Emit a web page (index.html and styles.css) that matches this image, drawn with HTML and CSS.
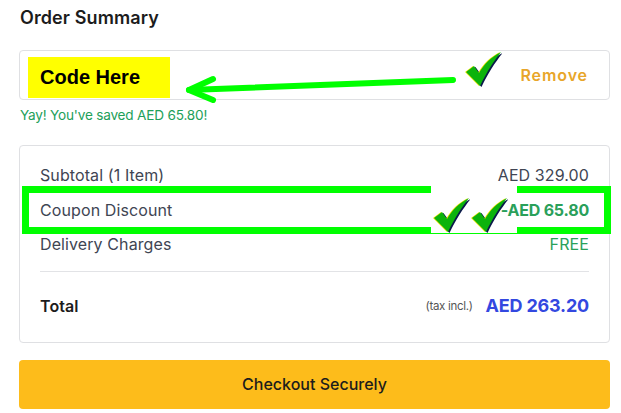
FILE: index.html
```html
<!DOCTYPE html>
<html>
<head>
<meta charset="utf-8">
<link rel="stylesheet" href="styles.css">
</head>
<body>
<div class="page">
  <h2 class="title">Order Summary</h2>

  <div class="coupon">
    <div class="code">Code Here</div>
    <span class="remove">Remove</span>
    <svg class="arrow" width="290" height="40" viewBox="0 0 290 40">
      <path d="M4 27 L268 17" stroke="#00ff00" stroke-width="6" stroke-linecap="round" fill="none"/>
      <path d="M28 16 L4 27 L28 37" stroke="#00ff00" stroke-width="6" stroke-linecap="round" stroke-linejoin="round" fill="none"/>
    </svg>
    <svg class="tick tick-a" width="38" height="36" viewBox="0 0 38 36">
      <path d="M2 21 L10 15 L15 22 C20 13 27 6 37 1 C30 10 23 20 16 35 Z" fill="#0b1a4a" transform="translate(1.5,1)"/>
      <path d="M2 21 L10 15 L15 22 C20 13 27 6 37 1 C30 10 23 20 16 35 Z" fill="#f2e600" transform="translate(-1,0)"/>
      <path d="M2 21 L10 15 L15 22 C20 13 27 6 37 1 C30 10 23 20 16 35 Z" fill="#0cb30c"/>
    </svg>
  </div>
  <p class="saved">Yay! You've saved AED 65.80!</p>

  <div class="summary">
    <div class="row"><span>Subtotal (1 Item)</span><span>AED 329.00</span></div>
    <div class="row discount">
      <span>Coupon Discount</span><span class="green strong">-AED 65.80</span>
      <div class="hl"><div class="hl-gap">
        <svg class="tick" width="38" height="36" viewBox="0 0 38 36">
          <path d="M2 21 L10 15 L15 22 C20 13 27 6 37 1 C30 10 23 20 16 35 Z" fill="#0b1a4a" transform="translate(1.5,1)"/>
          <path d="M2 21 L10 15 L15 22 C20 13 27 6 37 1 C30 10 23 20 16 35 Z" fill="#f2e600" transform="translate(-1,0)"/>
          <path d="M2 21 L10 15 L15 22 C20 13 27 6 37 1 C30 10 23 20 16 35 Z" fill="#0cb30c"/>
        </svg>
        <svg class="tick" width="38" height="36" viewBox="0 0 38 36">
          <path d="M2 21 L10 15 L15 22 C20 13 27 6 37 1 C30 10 23 20 16 35 Z" fill="#0b1a4a" transform="translate(1.5,1)"/>
          <path d="M2 21 L10 15 L15 22 C20 13 27 6 37 1 C30 10 23 20 16 35 Z" fill="#f2e600" transform="translate(-1,0)"/>
          <path d="M2 21 L10 15 L15 22 C20 13 27 6 37 1 C30 10 23 20 16 35 Z" fill="#0cb30c"/>
        </svg>
      </div></div>
    </div>
    <div class="row"><span>Delivery Charges</span><span class="green">FREE</span></div>
    <div class="divider"></div>
    <div class="row total">
      <span class="total-label">Total</span>
      <span class="total-right"><span class="tax">(tax incl.)</span><span class="amount">AED 263.20</span></span>
    </div>
  </div>

  <button class="checkout">Checkout Securely</button>
</div>
</body>
</html>
```

FILE: styles.css
```css
* { box-sizing: border-box; }
html, body { margin: 0; padding: 0; background: #fff; }
body {
  font-family: "Inter", "Liberation Sans", sans-serif;
  color: #404553;
}
.page {
  padding: 6px 11px 0 19px;
  display: flex;
  flex-direction: column;
}
.title {
  margin: 0 0 0 1px;
  font-size: 18px;
  font-weight: 600;
  line-height: 24px;
  color: #1c1c1c;
  letter-spacing: 0.1px;
}
.coupon {
  position: relative;
  margin-top: 20px;
  height: 50px;
  border: 1px solid #dfe0e3;
  border-radius: 4px;
  display: flex;
  align-items: flex-end;
  justify-content: space-between;
  padding: 0 21px 0 8px;
}
.code {
  width: 142px;
  height: 41px;
  margin-bottom: 1px;
  background: #ffff00;
  color: #000;
  font-family: "Liberation Sans", Arial, sans-serif;
  font-weight: 700;
  font-size: 20px;
  display: flex;
  align-items: center;
  padding-left: 12px;
}
.remove {
  align-self: center;
  color: #e8a62a;
  font-weight: 600;
  font-size: 16px;
  letter-spacing: 0.9px;
}
.arrow {
  position: absolute;
  left: 165px;
  top: 12px;
}
.tick-a {
  position: absolute;
  left: 444px;
  top: 0;
}
.saved {
  margin: 7px 0 0 1px;
  font-size: 13.6px;
  color: #22a05a;
  letter-spacing: -0.2px;
}
.summary {
  margin-top: 22px;
  border: 1px solid #dfe0e3;
  border-radius: 4px;
  padding: 12px 20px 2px 20px;
  display: flex;
  flex-direction: column;
}
.row {
  position: relative;
  display: flex;
  justify-content: space-between;
  align-items: center;
  height: 34.5px;
  font-size: 16px;
  color: #404553;
  letter-spacing: 0.1px;
}
.green { color: #2aa05a; }
.strong { font-weight: 700; letter-spacing: -0.2px; }
.hl {
  position: absolute;
  left: -18px;
  right: -22px;
  top: -7px;
  bottom: -7px;
  border: 7px solid #00ff00;
}
.hl-gap {
  position: absolute;
  left: 402px;
  width: 86px;
  top: -7px;
  bottom: -6px;
  background: #fff;
  display: flex;
  align-items: flex-end;
  padding-left: 1px;
}
.discount .strong { position: relative; z-index: 1; }
.divider {
  height: 1px;
  background: #e2e3e6;
  margin: 9px 0 0 0;
}
.total { height: 68px; }
.total-label {
  font-weight: 600;
  color: #1c1c1c;
}
.total-right { display: flex; align-items: center; gap: 13px; }
.tax { font-size: 11.5px; color: #555; letter-spacing: -0.3px; }
.amount {
  font-size: 18px;
  font-weight: 700;
  color: #3348e0;
  letter-spacing: -0.2px;
}
.checkout {
  margin-top: 17px;
  height: 49px;
  border: none;
  border-radius: 4px;
  background: #fdbc1b;
  font-family: "Inter", "Liberation Sans", sans-serif;
  font-size: 16px;
  font-weight: 500;
  color: #1c1c1c;
}
```
